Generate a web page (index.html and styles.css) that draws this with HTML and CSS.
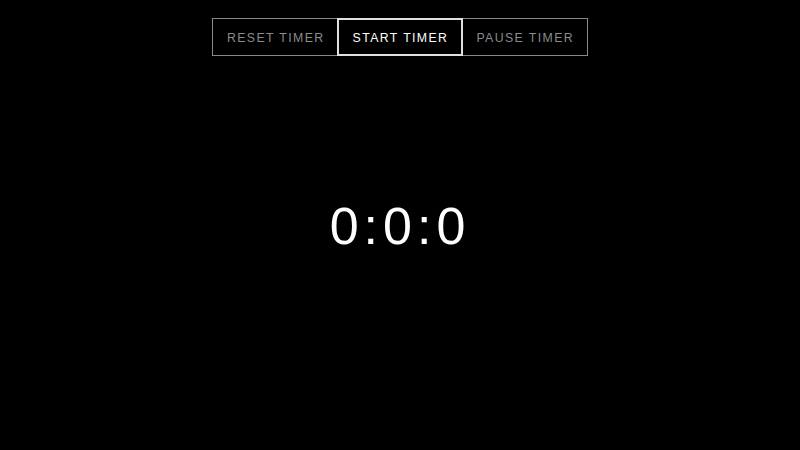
FILE: index.html
```html
<!DOCTYPE html>
<html lang="en">
<head>
<meta charset="utf-8">
<title>Timer</title>
<link rel="stylesheet" href="styles.css">
</head>
<body>
  <main class="app">
    <nav class="controls">
      <button class="btn">RESET TIMER</button>
      <button class="btn btn-active">START TIMER</button>
      <button class="btn">PAUSE TIMER</button>
    </nav>
    <div class="display">0:0:0</div>
  </main>
</body>
</html>
```

FILE: styles.css
```css
html, body {
  margin: 0;
  height: 100%;
  background: #000;
}

.app {
  height: 100%;
  display: flex;
  flex-direction: column;
  align-items: center;
  font-family: "Liberation Sans", Arial, sans-serif;
}

.controls {
  margin-top: 18px;
  display: flex;
}

.btn {
  height: 38px;
  padding: 1px 12.5px 0 13.5px;
  background: #000;
  color: #8c8c8c;
  border: 1px solid #888;
  font-family: inherit;
  font-size: 12.3px;
  letter-spacing: 1.4px;
  cursor: pointer;
}

.btn + .btn {
  margin-left: -1px;
}

.btn-active {
  color: #fff;
  border: 2px solid #e0e0e0;
  position: relative;
}

.display {
  margin-top: 140px;
  color: #fff;
  font-size: 52px;
  letter-spacing: 5px;
  line-height: 60px;
}
```
